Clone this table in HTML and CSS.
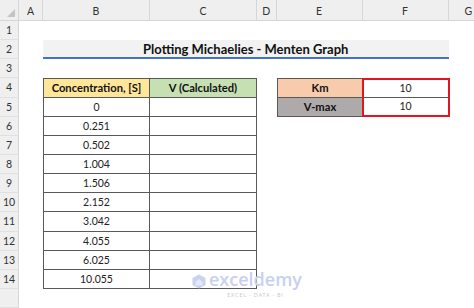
FILE: index.html
```html
<!DOCTYPE html>
<html>
<head>
<meta charset="utf-8">
<link rel="stylesheet" href="styles.css">
</head>
<body>
<div class="sheet">
  <div class="row hdr">
    <div class="corner"><span class="tri"></span></div>
    <div class="ch">A</div><div class="ch">B</div><div class="ch">C</div><div class="ch">D</div><div class="ch">E</div><div class="ch">F</div><div class="ch last">G</div>
  </div>
  <div class="row"><div class="rh">1</div></div>
  <div class="row"><div class="rh">2</div><div></div><div class="title">Plotting Michaelies - Menten Graph</div></div>
  <div class="row"><div class="rh">3</div></div>
  <div class="row"><div class="rh">4</div><div></div>
    <div class="t tl top yellow b">Concentration, [S]</div><div class="t top green b">V (Calculated)</div><div></div>
    <div class="k top peach b">Km</div><div class="red r1">10</div>
  </div>
  <div class="row"><div class="rh">5</div><div></div>
    <div class="t tl">0</div><div class="t"></div><div></div>
    <div class="k gray b">V-max</div><div class="red r2">10</div>
  </div>
  <div class="row"><div class="rh">6</div><div></div><div class="t tl">0.251</div><div class="t"></div></div>
  <div class="row"><div class="rh">7</div><div></div><div class="t tl">0.502</div><div class="t"></div></div>
  <div class="row"><div class="rh">8</div><div></div><div class="t tl">1.004</div><div class="t"></div></div>
  <div class="row"><div class="rh">9</div><div></div><div class="t tl">1.506</div><div class="t"></div></div>
  <div class="row"><div class="rh">10</div><div></div><div class="t tl">2.152</div><div class="t"></div></div>
  <div class="row"><div class="rh">11</div><div></div><div class="t tl">3.042</div><div class="t"></div></div>
  <div class="row"><div class="rh">12</div><div></div><div class="t tl">4.055</div><div class="t"></div></div>
  <div class="row"><div class="rh">13</div><div></div><div class="t tl">6.025</div><div class="t"></div></div>
  <div class="row"><div class="rh">14</div><div></div><div class="t tl">10.055</div><div class="t"></div></div>
  <div class="row tall"><div class="rh"></div></div>

  <div class="watermark">
    <svg class="wm-logo" width="14" height="15" viewBox="0 0 14 15">
      <path d="M7 0.5 L13.5 4 L13.5 11 L7 14.5 L0.5 11 L0.5 4 Z" fill="#c9d2ee"/>
      <path d="M3.5 8 L7 5 L10.5 8 L10.5 11.5 L3.5 11.5 Z" fill="#e6eaf8"/>
    </svg>
    <div class="wm-text">
      <span class="wm-name">exceldemy</span>
      <span class="wm-sub">EXCEL · DATA · BI</span>
    </div>
  </div>
</div>
</body>
</html>
```
FILE: styles.css
```css
html, body {
  margin: 0;
  padding: 0;
  background: #ffffff;
  overflow: hidden;
}
.sheet {
  position: relative;
  width: 474px;
  height: 308px;
  overflow: hidden;
  font-family: "Lato", "Liberation Sans", sans-serif;
  color: #1a1a1a;
}
.row {
  display: grid;
  grid-template-columns: 19px 24px 107px 107px 19.5px 86px 86px 1fr;
  height: 19.15px;
}
.row.hdr {
  height: 21px;
  background: #efefef;
  border-bottom: 1px solid #d6d6d6;
  box-sizing: border-box;
}
.row.tall {
  height: 19px;
}
.corner {
  position: relative;
  border-right: 1px solid #d6d6d6;
}
.tri {
  position: absolute;
  right: 3px;
  bottom: 3px;
  width: 0;
  height: 0;
  border-left: 8px solid transparent;
  border-bottom: 8px solid #c4c4c4;
}
.ch {
  display: flex;
  align-items: center;
  justify-content: center;
  font-size: 10.5px;
  color: #333;
  border-right: 1px solid #d6d6d6;
  padding-top: 1px;
}
.ch.last {
  border-right: none;
  justify-content: flex-start;
  padding-left: 16px;
}
.rh {
  background: #efefef;
  border-right: 1px solid #d6d6d6;
  border-bottom: 1px solid #e0e0e0;
  box-sizing: border-box;
  display: flex;
  align-items: center;
  justify-content: center;
  font-size: 10.5px;
  color: #333;
}
.title {
  grid-column: 3 / 8;
  background: #f2f2f2;
  border-bottom: 2px solid #4472c4;
  box-sizing: border-box;
  display: flex;
  align-items: center;
  justify-content: center;
  font-weight: 700;
  font-size: 13px;
  color: #111;
}
.t, .k, .red {
  box-sizing: border-box;
  display: flex;
  align-items: center;
  justify-content: center;
  font-size: 10.5px;
  color: #222;
}
.t {
  border-right: 1px solid #595959;
  border-bottom: 1px solid #595959;
}
.t.tl {
  border-left: 1px solid #595959;
}
.top {
  border-top: 1px solid #595959;
}
.b {
  font-weight: 700;
  font-size: 11.2px;
  color: #111;
}
.yellow { background: #ffe699; }
.green { background: #c6e0b4; }
.peach { background: #f8cbad; }
.gray { background: #aeaaaa; }
.k {
  border-left: 1px solid #595959;
  border-bottom: 1px solid #595959;
}
.red {
  margin-left: -1px;
  margin-right: -1px;
}
.red.r1 {
  border: 2px solid #e3161f;
  border-bottom: 1px solid #595959;
}
.red.r2 {
  border: 2px solid #e3161f;
  border-top: none;
}
.watermark {
  position: absolute;
  left: 192px;
  top: 267px;
  display: flex;
  align-items: flex-start;
  gap: 3px;
}
.wm-logo {
  margin-top: 7px;
}
.wm-text {
  display: flex;
  flex-direction: column;
  align-items: center;
}
.wm-name {
  font-family: "Open Sans", "Liberation Sans", sans-serif;
  font-size: 18px;
  line-height: 25px;
  color: #c8d0f0;
  font-weight: 600;
}
.wm-sub {
  font-size: 5px;
  letter-spacing: 1px;
  color: #c9c9c9;
  line-height: 7px;
}
```
